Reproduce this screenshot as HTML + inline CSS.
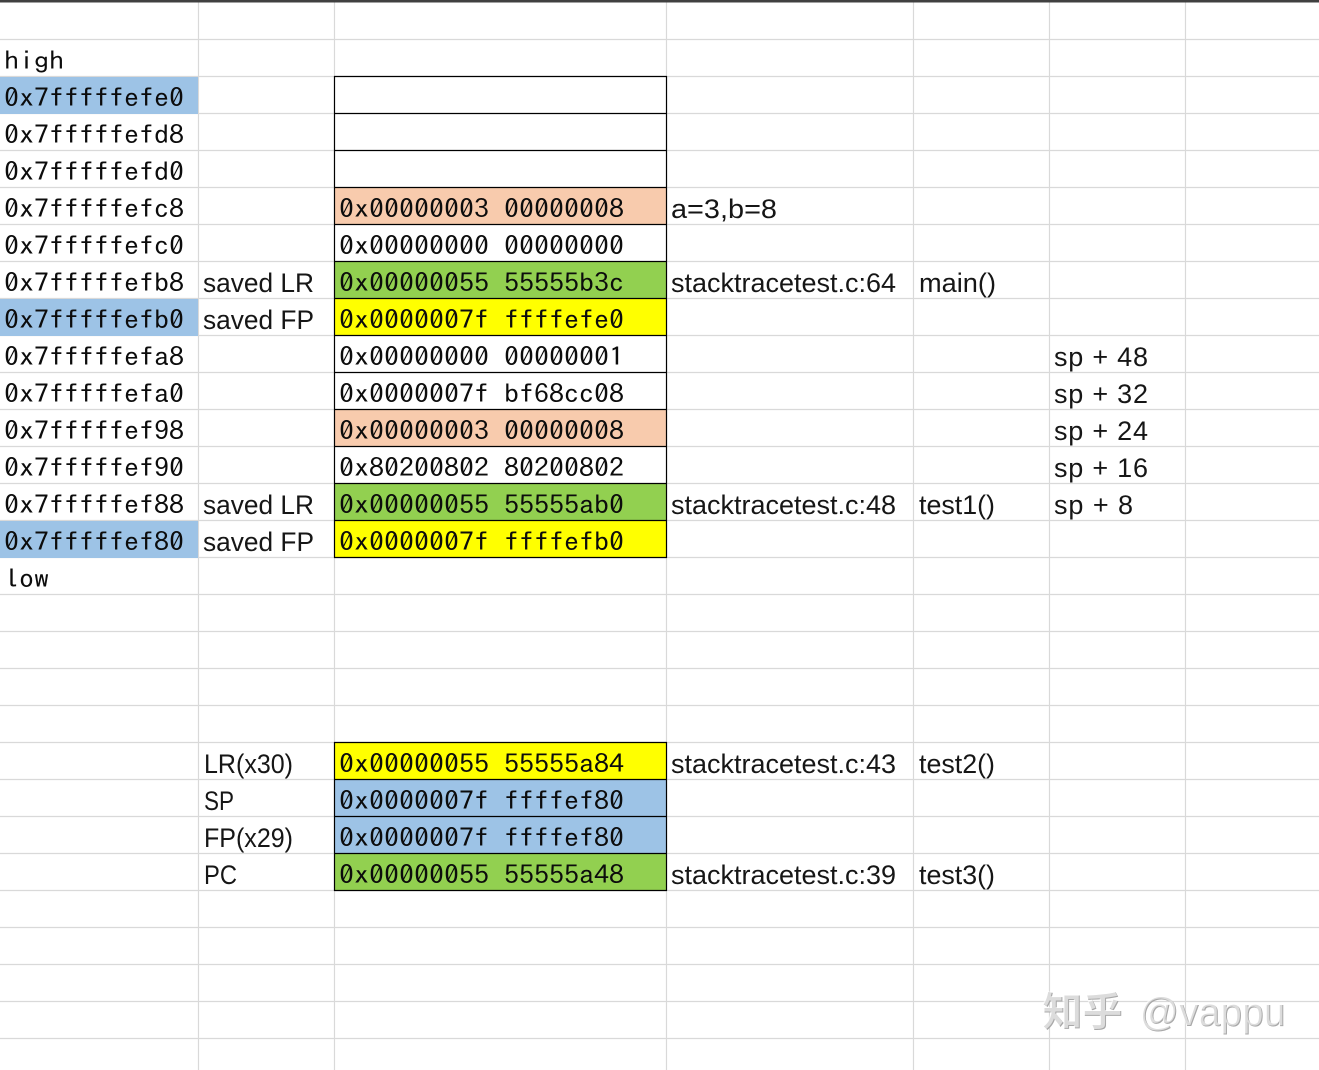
<!DOCTYPE html>
<html><head><meta charset="utf-8"><style>
html,body{margin:0;padding:0;background:#fff;width:1319px;height:1070px;overflow:hidden}
svg{display:block}
.m{font-family:"IPAGothic","Liberation Mono",monospace;font-size:26px;fill:#0c0c0c}
.s{font-family:"Liberation Sans","Noto Sans CJK SC",sans-serif;font-size:27px;fill:#161616}
.g{stroke:#d9d9d9;stroke-width:1.2}
.k{stroke:#000;stroke-width:1.2}
</style></head><body>
<svg width="1319" height="1070" viewBox="0 0 1319 1070" xmlns="http://www.w3.org/2000/svg">
<rect width="1319" height="1070" fill="#fff"/>
<g class="g">
<path d="M198.5 2V1070M334.5 2V1070M666.5 2V1070M913.5 2V1070M1049.5 2V1070M1185.5 2V1070" fill="none"/>
<path d="M0 39.5H1319M0 76.5H1319M0 113.5H1319M0 150.5H1319M0 187.5H1319M0 224.5H1319M0 261.5H1319M0 298.5H1319M0 335.5H1319M0 372.5H1319M0 409.5H1319M0 446.5H1319M0 483.5H1319M0 520.5H1319M0 557.5H1319M0 594.5H1319M0 631.5H1319M0 668.5H1319M0 705.5H1319M0 742.5H1319M0 779.5H1319M0 816.5H1319M0 853.5H1319M0 890.5H1319M0 927.5H1319M0 964.5H1319M0 1001.5H1319M0 1038.5H1319" fill="none"/>
</g>
<rect x="0" y="0" width="1319" height="2.5" fill="#404040"/>
<!-- fills -->
<rect x="0" y="77" width="198" height="37" fill="#9dc3e6"/>
<rect x="0" y="299" width="198" height="37" fill="#9dc3e6"/>
<rect x="0" y="521" width="198" height="37" fill="#9dc3e6"/>
<rect x="335" y="77" width="331" height="481" fill="#fff"/>
<rect x="335" y="188" width="331" height="37" fill="#f8cbad"/>
<rect x="335" y="262" width="331" height="37" fill="#92d050"/>
<rect x="335" y="299" width="331" height="37" fill="#ffff00"/>
<rect x="335" y="410" width="331" height="37" fill="#f8cbad"/>
<rect x="335" y="484" width="331" height="37" fill="#92d050"/>
<rect x="335" y="521" width="331" height="37" fill="#ffff00"/>
<rect x="335" y="743" width="331" height="37" fill="#ffff00"/>
<rect x="335" y="780" width="331" height="74" fill="#9dc3e6"/>
<rect x="335" y="854" width="331" height="37" fill="#92d050"/>
<g class="k" fill="none">
<path d="M334.5 76V558M666.5 76V558M334 76.5H667M334 113.5H667M334 150.5H667M334 187.5H667M334 224.5H667M334 261.5H667M334 298.5H667M334 335.5H667M334 372.5H667M334 409.5H667M334 446.5H667M334 483.5H667M334 520.5H667M334 557.5H667"/>
<path d="M334.5 742V891M666.5 742V891M334 742.5H667M334 779.5H667M334 816.5H667M334 853.5H667M334 890.5H667"/>
</g>
<!-- address column -->
<g class="m">
<text x="4" y="70" textLength="60" lengthAdjust="spacingAndGlyphs">high</text>
<text x="4" y="107" textLength="180" lengthAdjust="spacingAndGlyphs">0x7fffffefe0</text>
<text x="4" y="144" textLength="180" lengthAdjust="spacingAndGlyphs">0x7fffffefd8</text>
<text x="4" y="181" textLength="180" lengthAdjust="spacingAndGlyphs">0x7fffffefd0</text>
<text x="4" y="218" textLength="180" lengthAdjust="spacingAndGlyphs">0x7fffffefc8</text>
<text x="4" y="255" textLength="180" lengthAdjust="spacingAndGlyphs">0x7fffffefc0</text>
<text x="4" y="292" textLength="180" lengthAdjust="spacingAndGlyphs">0x7fffffefb8</text>
<text x="4" y="329" textLength="180" lengthAdjust="spacingAndGlyphs">0x7fffffefb0</text>
<text x="4" y="366" textLength="180" lengthAdjust="spacingAndGlyphs">0x7fffffefa8</text>
<text x="4" y="403" textLength="180" lengthAdjust="spacingAndGlyphs">0x7fffffefa0</text>
<text x="4" y="440" textLength="180" lengthAdjust="spacingAndGlyphs">0x7fffffef98</text>
<text x="4" y="477" textLength="180" lengthAdjust="spacingAndGlyphs">0x7fffffef90</text>
<text x="4" y="514" textLength="180" lengthAdjust="spacingAndGlyphs">0x7fffffef88</text>
<text x="4" y="551" textLength="180" lengthAdjust="spacingAndGlyphs">0x7fffffef80</text>
<text x="4" y="588" textLength="45" lengthAdjust="spacingAndGlyphs">low</text>
</g>
<!-- value column -->
<g class="m">
<text x="339" y="218" textLength="150" lengthAdjust="spacingAndGlyphs">0x00000003</text><text x="504" y="218" textLength="120" lengthAdjust="spacingAndGlyphs">00000008</text>
<text x="339" y="255" textLength="150" lengthAdjust="spacingAndGlyphs">0x00000000</text><text x="504" y="255" textLength="120" lengthAdjust="spacingAndGlyphs">00000000</text>
<text x="339" y="292" textLength="150" lengthAdjust="spacingAndGlyphs">0x00000055</text><text x="504" y="292" textLength="120" lengthAdjust="spacingAndGlyphs">55555b3c</text>
<text x="339" y="329" textLength="150" lengthAdjust="spacingAndGlyphs">0x0000007f</text><text x="504" y="329" textLength="120" lengthAdjust="spacingAndGlyphs">ffffefe0</text>
<text x="339" y="366" textLength="150" lengthAdjust="spacingAndGlyphs">0x00000000</text><text x="504" y="366" textLength="120" lengthAdjust="spacingAndGlyphs">00000001</text>
<text x="339" y="403" textLength="150" lengthAdjust="spacingAndGlyphs">0x0000007f</text><text x="504" y="403" textLength="120" lengthAdjust="spacingAndGlyphs">bf68cc08</text>
<text x="339" y="440" textLength="150" lengthAdjust="spacingAndGlyphs">0x00000003</text><text x="504" y="440" textLength="120" lengthAdjust="spacingAndGlyphs">00000008</text>
<text x="339" y="477" textLength="150" lengthAdjust="spacingAndGlyphs">0x80200802</text><text x="504" y="477" textLength="120" lengthAdjust="spacingAndGlyphs">80200802</text>
<text x="339" y="514" textLength="150" lengthAdjust="spacingAndGlyphs">0x00000055</text><text x="504" y="514" textLength="120" lengthAdjust="spacingAndGlyphs">55555ab0</text>
<text x="339" y="551" textLength="150" lengthAdjust="spacingAndGlyphs">0x0000007f</text><text x="504" y="551" textLength="120" lengthAdjust="spacingAndGlyphs">ffffefb0</text>
<text x="339" y="773" textLength="150" lengthAdjust="spacingAndGlyphs">0x00000055</text><text x="504" y="773" textLength="120" lengthAdjust="spacingAndGlyphs">55555a84</text>
<text x="339" y="810" textLength="150" lengthAdjust="spacingAndGlyphs">0x0000007f</text><text x="504" y="810" textLength="120" lengthAdjust="spacingAndGlyphs">ffffef80</text>
<text x="339" y="847" textLength="150" lengthAdjust="spacingAndGlyphs">0x0000007f</text><text x="504" y="847" textLength="120" lengthAdjust="spacingAndGlyphs">ffffef80</text>
<text x="339" y="884" textLength="150" lengthAdjust="spacingAndGlyphs">0x00000055</text><text x="504" y="884" textLength="120" lengthAdjust="spacingAndGlyphs">55555a48</text>
</g>
<!-- sans labels -->
<g class="s">
<text x="203" y="292" textLength="111" lengthAdjust="spacingAndGlyphs">saved LR</text>
<text x="203" y="329" textLength="111" lengthAdjust="spacingAndGlyphs">saved FP</text>
<text x="203" y="514" textLength="111" lengthAdjust="spacingAndGlyphs">saved LR</text>
<text x="203" y="551" textLength="111" lengthAdjust="spacingAndGlyphs">saved FP</text>
<text x="204" y="773" textLength="89" lengthAdjust="spacingAndGlyphs">LR(x30)</text>
<text x="204" y="810" textLength="30" lengthAdjust="spacingAndGlyphs">SP</text>
<text x="204" y="847" textLength="89" lengthAdjust="spacingAndGlyphs">FP(x29)</text>
<text x="204" y="884" textLength="33" lengthAdjust="spacingAndGlyphs">PC</text>
<text x="671" y="218" textLength="106" lengthAdjust="spacingAndGlyphs">a=3,b=8</text>
<text x="671" y="292" textLength="225" lengthAdjust="spacingAndGlyphs">stacktracetest.c:64</text>
<text x="671" y="514" textLength="225" lengthAdjust="spacingAndGlyphs">stacktracetest.c:48</text>
<text x="671" y="773" textLength="225" lengthAdjust="spacingAndGlyphs">stacktracetest.c:43</text>
<text x="671" y="884" textLength="225" lengthAdjust="spacingAndGlyphs">stacktracetest.c:39</text>
<text x="919" y="292" textLength="77" lengthAdjust="spacingAndGlyphs">main()</text>
<text x="919" y="514" textLength="76" lengthAdjust="spacingAndGlyphs">test1()</text>
<text x="919" y="773" textLength="76" lengthAdjust="spacingAndGlyphs">test2()</text>
<text x="919" y="884" textLength="76" lengthAdjust="spacingAndGlyphs">test3()</text>
<text x="1054" y="366" textLength="94" lengthAdjust="spacing">sp + 48</text>
<text x="1054" y="403" textLength="94" lengthAdjust="spacing">sp + 32</text>
<text x="1054" y="440" textLength="94" lengthAdjust="spacing">sp + 24</text>
<text x="1054" y="477" textLength="94" lengthAdjust="spacing">sp + 16</text>
<text x="1054" y="514" textLength="79" lengthAdjust="spacing">sp + 8</text>
</g>
<!-- watermark -->
<g font-size="40" fill="#a8a8a8">
<text x="1043" y="1026" font-family="'Liberation Sans','Noto Sans CJK SC',sans-serif" font-weight="700" textLength="80" lengthAdjust="spacingAndGlyphs">知乎</text>
<text x="1140" y="1026" font-family="'Liberation Sans',sans-serif" textLength="146" lengthAdjust="spacingAndGlyphs">@vappu</text>
</g>
<g font-size="40" fill="#fff" fill-opacity=".6">
<text x="1042" y="1025" font-family="'Liberation Sans','Noto Sans CJK SC',sans-serif" font-weight="700" textLength="80" lengthAdjust="spacingAndGlyphs">知乎</text>
<text x="1139" y="1025" font-family="'Liberation Sans',sans-serif" textLength="146" lengthAdjust="spacingAndGlyphs">@vappu</text>
</g>
</svg>
</body></html>
